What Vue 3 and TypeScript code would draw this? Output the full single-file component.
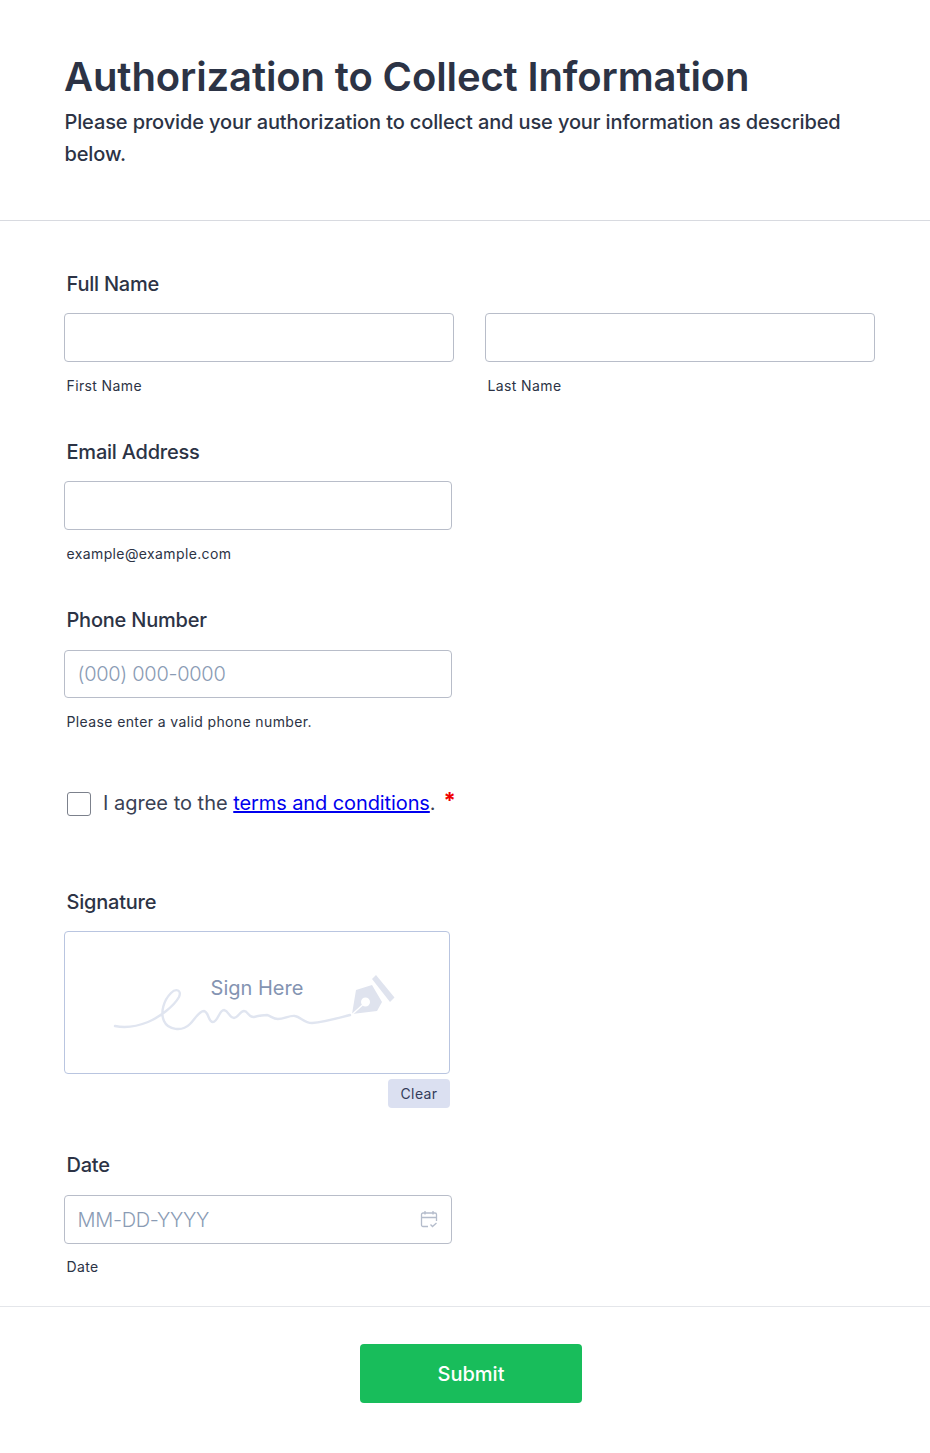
<script setup lang="ts">
const submitLabel: string = 'Submit'
</script>

<template>
  <div class="page">
    <header class="head">
      <h1>Authorization to Collect Information</h1>
      <p>Please provide your authorization to collect and use your information as described below.</p>
    </header>

    <form class="form" @submit.prevent>
      <section class="field">
        <div class="label">Full Name</div>
        <div class="name-row">
          <div class="col">
            <input class="input" type="text" />
            <div class="sub">First Name</div>
          </div>
          <div class="col">
            <input class="input" type="text" />
            <div class="sub">Last Name</div>
          </div>
        </div>
      </section>

      <section class="field">
        <div class="label">Email Address</div>
        <input class="input narrow" type="email" />
        <div class="sub">example@example.com</div>
      </section>

      <section class="field">
        <div class="label label-low">Phone Number</div>
        <input class="input narrow phone" type="tel" placeholder="(000) 000-0000" />
        <div class="sub">Please enter a valid phone number.</div>
      </section>

      <section class="field agree">
        <span class="check"></span>
        <span class="agree-text">I agree to the <a href="#">terms and conditions</a>.</span>
        <span class="req">*</span>
      </section>

      <section class="field">
        <div class="label">Signature</div>
        <div class="sign">
          <span class="sign-text">Sign Here</span>
          <svg class="sign-art" viewBox="64 931 386 143" aria-hidden="true">
            <path class="sign-line" d="M115 1026 C125 1028 138 1026 148 1022 C160 1017 174 1006 179 997 C182 990 176 988 171 993 C164 1000 160 1012 164 1021 C168 1030 182 1032 190 1024 C195 1019 199 1011 204 1011 C209 1012 208 1022 213 1022 C218 1022 219 1010 224 1010 C229 1011 229 1018 234 1018 C238 1018 240 1011 244 1011 C248 1011 249 1018 254 1017 C258 1016 262 1015 267 1015 C271 1016 273 1019 278 1019 C284 1019 290 1015 295 1016 C301 1017 304 1023 312 1023 C325 1022 338 1018 350 1015" />
            <path class="nib" fill-rule="evenodd" d="M356 990 L372 985 L382 1002 L377 1011 L352 1014 Z M365.5 997.5 A4.5 4.5 0 1 0 365.51 1006.5 A4.5 4.5 0 1 0 365.5 997.5 Z" />
            <path class="slit" d="M362.5 1005 L352 1014.5" />
            <path class="nib" d="M376 975 L372 979 L390 1002 L394.5 997.5 Z" />
          </svg>
        </div>
        <div class="clear-row"><button type="button" class="clear">Clear</button></div>
      </section>

      <section class="field last">
        <div class="label label-low">Date</div>
        <div class="date-wrap">
          <input class="input narrow" type="text" placeholder="MM-DD-YYYY" />
          <svg class="cal" viewBox="0 0 18 18" aria-hidden="true">
            <path d="M8 16.5 H3 A1.5 1.5 0 0 1 1.5 15 V4.5 A1.5 1.5 0 0 1 3 3 H15 A1.5 1.5 0 0 1 16.5 4.5 V11 M1.5 7.5 H16.5 M5 1 V4.5 M13 1 V4.5 M10.5 14.5 L12.5 16.5 L16.5 13" />
          </svg>
        </div>
        <div class="sub date-sub">Date</div>
      </section>
    </form>

    <footer class="foot">
      <button type="submit" class="submit">{{ submitLabel }}</button>
    </footer>
  </div>
</template>

<style>
html, body { margin: 0; background: #fff; }
</style>

<style scoped>
.page {
  width: 930px;
  height: 1453px;
  box-sizing: border-box;
  font-family: Inter, "Liberation Sans", sans-serif;
  color: #2c3345;
  background: #fff;
}
.head {
  padding: 53px 64px 50px 64px;
  border-bottom: 1px solid #d8dae0;
}
.head h1 {
  margin: 0 0 5px;
  font-size: 40px;
  line-height: 48px;
  font-weight: 600;
  letter-spacing: -0.12px;
}
.head p {
  margin: 0;
  padding-left: 0.5px;
  font-size: 20px;
  line-height: 32px;
  font-weight: 500;
  letter-spacing: -0.125px;
}
.form { padding: 51px 55px 0 64px; }
.field { margin-bottom: 45px; }
.field.last { margin-bottom: 30px; }
.label {
  padding-left: 2.5px;
  margin-bottom: 17px;
  font-size: 20px;
  line-height: 24px;
  font-weight: 500;
  letter-spacing: -0.22px;
}
.label-low { margin-bottom: 18px; }
.name-row { display: flex; gap: 31px; }
.col { width: 390px; }
.input {
  display: block;
  width: 100%;
  height: 49px;
  box-sizing: border-box;
  padding: 0 12.5px;
  border: 1px solid #b8bdc9;
  border-radius: 4px;
  background: #fff;
  font: 300 20px/24px Inter, "Liberation Sans", sans-serif;
  color: #2c3345;
  outline: none;
}
.input::placeholder { color: #8a9bb4; opacity: 1; letter-spacing: -0.3px; }
.narrow { width: 388px; }
.phone { height: 48px; }
.sub {
  margin-top: 15px;
  padding-left: 2.5px;
  font-size: 14px;
  line-height: 18px;
  letter-spacing: 0.38px;
}
.date-sub { margin-top: 14px; }
.agree {
  display: flex;
  align-items: center;
  height: 69px;
  box-sizing: border-box;
  padding: 16px 0 29px 3px;
}
.check {
  width: 24px;
  height: 24px;
  box-sizing: border-box;
  border: 1px solid #7c818c;
  border-radius: 3px;
  margin-right: 12px;
}
.agree-text {
  position: relative;
  top: -1px;
  font-size: 20px;
  line-height: 24px;
  color: #3a4154;
}
.agree-text a { color: #0000ee; text-decoration: underline; letter-spacing: -0.1px; }
.req {
  align-self: flex-start;
  margin: -4px 0 0 8px;
  color: #f00000;
  font-size: 22px;
  line-height: 24px;
  font-weight: 700;
}
.sign {
  position: relative;
  width: 386px;
  height: 143px;
  box-sizing: border-box;
  border: 1px solid #b9c5e0;
  border-radius: 4px;
  background: #fff;
  display: flex;
  justify-content: center;
  padding-top: 44px;
}
.sign-text {
  font-size: 20px;
  line-height: 24px;
  color: #8494b2;
}
.sign-art {
  position: absolute;
  left: -1px;
  top: -1px;
  width: 386px;
  height: 143px;
}
.sign-line {
  fill: none;
  stroke: #e0e5f0;
  stroke-width: 2.4;
  stroke-linecap: round;
}
.nib { fill: #dfe3ee; }
.slit { fill: none; stroke: #fff; stroke-width: 1.4; }
.clear-row {
  display: flex;
  justify-content: flex-end;
  width: 386px;
  margin-top: 5px;
}
.clear {
  width: 62px;
  height: 29px;
  padding: 0;
  border: 0;
  border-radius: 4px;
  background: #dbe0f1;
  color: #343c5a;
  font: 400 14px/18px Inter, "Liberation Sans", sans-serif;
  letter-spacing: 0.4px;
}
.date-wrap { position: relative; width: 388px; }
.cal {
  position: absolute;
  right: 14px;
  top: 15px;
  width: 18px;
  height: 18px;
  fill: none;
  stroke: #b4bccb;
  stroke-width: 1.3;
}
.foot {
  border-top: 1px solid #e4e6ea;
  padding: 37px 0 0 12px;
  display: flex;
  justify-content: center;
}
.submit {
  width: 222px;
  height: 59px;
  border: 0;
  border-radius: 4px;
  background: #18bd5b;
  color: #fff;
  font: 500 20px/24px Inter, "Liberation Sans", sans-serif;
}
</style>
